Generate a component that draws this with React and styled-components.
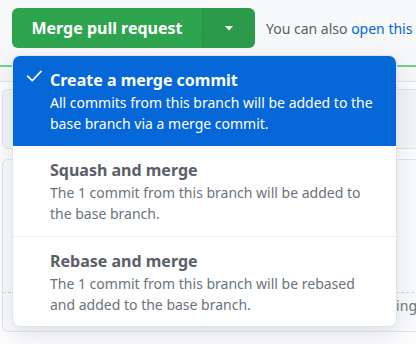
import React from "react";
import styled, { createGlobalStyle, css } from "styled-components";

const Global = createGlobalStyle`
  html, body { margin: 0; padding: 0; background: #f6f8fa; }
  body { font-family: "Noto Sans", "Liberation Sans", sans-serif; -webkit-font-smoothing: antialiased; }
  * { box-sizing: border-box; }
`;

const Page = styled.div`
  position: relative;
  width: 416px;
  height: 344px;
  overflow: hidden;
  padding: 8px 0 0 12px;
  background: #f7f8fa;
`;

const TopRow = styled.div`
  display: flex;
  align-items: center;
  gap: 11px;
  height: 40px;
`;

const ButtonGroup = styled.div`
  display: flex;
  flex: none;
`;

const MainButton = styled.button`
  width: 190px;
  height: 40px;
  border: none;
  border-radius: 6px 0 0 6px;
  background: #2ea44f;
  color: #fff;
  font-family: inherit;
  font-size: 16px;
  font-weight: 700;
  padding: 0;
`;

const CaretButton = styled.button`
  width: 53px;
  height: 40px;
  border: none;
  border-left: 1px solid #26913f;
  border-radius: 0 6px 6px 0;
  background: #2c9a4b;
  display: flex;
  align-items: center;
  justify-content: center;
  padding: 0;
`;

const AlsoText = styled.div`
  font-size: 14px;
  line-height: 20px;
  padding-top: 2px;
  color: #586069;
  white-space: nowrap;
`;

const Link = styled.span`
  color: #0366d6;
`;

const Backdrop = styled.div`
  margin-left: -12px;
  display: flex;
  flex-direction: column;
`;

const GreenRule = styled.div`
  margin-top: 17px;
  height: 2px;
  background: #6fcf83;
`;

const Card = styled.div`
  margin-top: 14px;
  border-top: 1px solid #e1e4e8;
  background: #fdfdfe;
  padding: 7px 0 0 2px;
  display: flex;
  flex-direction: column;
  gap: 10px;
  height: 270px;
`;

const InnerBox = styled.div`
  margin-right: -14px;
  height: ${(p) => p.$h}px;
  border: 1px solid #e1e4e8;
  border-radius: 6px;
  background: ${(p) => p.$bg};
  display: flex;
  flex-direction: column;
  justify-content: flex-end;
`;

const Footer = styled.div`
  border-top: 1px dashed #d1d5da;
  padding: 4px 12px 16px 0;
  text-align: right;
  font-size: 14px;
  line-height: 18px;
  color: #6a737d;
  white-space: nowrap;
`;

const Menu = styled.div`
  position: absolute;
  top: 55px;
  left: 12px;
  width: 385px;
  background: #fff;
  border: 1px solid #e1e4e8;
  border-radius: 8px;
  box-shadow: 0 8px 24px rgba(149, 157, 165, 0.28);
  overflow: hidden;
`;

const Item = styled.div`
  position: relative;
  padding: 12px 12px 12px 37px;
  border-bottom: 1px solid #eaecef;
  &:last-child {
    border-bottom: none;
    padding-bottom: 11px;
  }
  ${(p) =>
    p.$selected &&
    css`
      background: #0567d8;
      border-bottom: none;
    `}
`;

const Check = styled.svg`
  position: absolute;
  left: 13px;
  top: 14px;
`;

const Title = styled.div`
  font-size: 16px;
  font-weight: 700;
  line-height: 24px;
  color: ${(p) => (p.$selected ? "#fff" : "#5a6068")};
`;

const Desc = styled.div`
  font-size: 14px;
  line-height: 21px;
  white-space: pre-line;
  color: ${(p) => (p.$selected ? "#fff" : "#6a737d")};
`;

const options = [
  {
    title: "Create a merge commit",
    desc: "All commits from this branch will be added to the\nbase branch via a merge commit.",
    selected: true,
  },
  {
    title: "Squash and merge",
    desc: "The 1 commit from this branch will be added to\nthe base branch.",
  },
  {
    title: "Rebase and merge",
    desc: "The 1 commit from this branch will be rebased\nand added to the base branch.",
  },
];

export default function App() {
  return (
    <>
      <Global />
      <Page>
        <TopRow>
          <ButtonGroup>
            <MainButton>Merge pull request</MainButton>
            <CaretButton aria-label="Select merge method">
              <svg width="10" height="5" viewBox="0 0 10 5">
                <path d="M1 0h8L5 4.5z" fill="#fff" />
              </svg>
            </CaretButton>
          </ButtonGroup>
          <AlsoText>
            You can also <Link>open this in GitHub Desktop</Link>
          </AlsoText>
        </TopRow>
        <Backdrop>
          <GreenRule />
          <Card>
            <InnerBox $h={60} $bg="#f3f5f7" />
            <InnerBox $h={173} $bg="#fafbfc">
              <Footer>Still waiting</Footer>
            </InnerBox>
          </Card>
        </Backdrop>
        <Menu>
          {options.map((o) => (
            <Item key={o.title} $selected={o.selected}>
              {o.selected && (
                <Check width="16" height="12" viewBox="0 0 16 12">
                  <polyline
                    points="1.5,6.2 6.3,10.6 15,1.4"
                    fill="none"
                    stroke="#fff"
                    strokeWidth="1.6"
                    strokeLinecap="round"
                    strokeLinejoin="round"
                  />
                </Check>
              )}
              <Title $selected={o.selected}>{o.title}</Title>
              <Desc $selected={o.selected}>{o.desc}</Desc>
            </Item>
          ))}
        </Menu>
      </Page>
    </>
  );
}
